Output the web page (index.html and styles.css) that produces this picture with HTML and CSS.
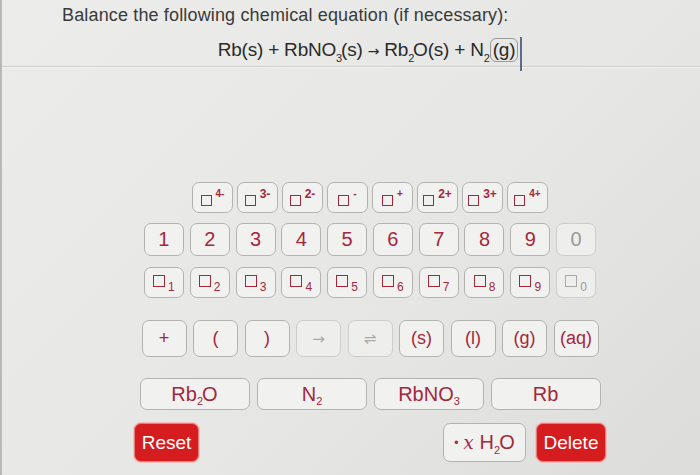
FILE: index.html
```html
<!DOCTYPE html>
<html>
<head>
<meta charset="utf-8">
<link rel="stylesheet" href="styles.css">
</head>
<body>
<div class="page">
  <div class="header">
    <div class="title">Balance the following chemical equation (if necessary):</div>
    <div class="eqwrap">
      <div class="equation">Rb(s) + RbNO<span class="esub">3</span>(s) <span class="arr">→</span> Rb<span class="esub">2</span>O(s) + N<span class="esub">2</span><span class="sel">(g)</span><span class="caret"></span></div>
    </div>
  </div>
  <div class="kb">
    <div class="row r1">
      <div class="key"><span class="box"></span><span class="sup">4-</span></div>
      <div class="key"><span class="box"></span><span class="sup big">3-</span></div>
      <div class="key"><span class="box"></span><span class="sup big">2-</span></div>
      <div class="key"><span class="box"></span><span class="sup">-</span></div>
      <div class="key"><span class="box"></span><span class="sup">+</span></div>
      <div class="key"><span class="box"></span><span class="sup big">2+</span></div>
      <div class="key"><span class="box"></span><span class="sup big">3+</span></div>
      <div class="key"><span class="box"></span><span class="sup">4+</span></div>
    </div>
    <div class="row r2">
      <div class="key">1</div>
      <div class="key">2</div>
      <div class="key">3</div>
      <div class="key">4</div>
      <div class="key">5</div>
      <div class="key">6</div>
      <div class="key">7</div>
      <div class="key">8</div>
      <div class="key">9</div>
      <div class="key off">0</div>
    </div>
    <div class="row r3">
      <div class="key"><span class="sbox"></span><span class="sub">1</span></div>
      <div class="key"><span class="sbox"></span><span class="sub">2</span></div>
      <div class="key"><span class="sbox"></span><span class="sub">3</span></div>
      <div class="key"><span class="sbox"></span><span class="sub">4</span></div>
      <div class="key"><span class="sbox"></span><span class="sub">5</span></div>
      <div class="key"><span class="sbox"></span><span class="sub">6</span></div>
      <div class="key"><span class="sbox"></span><span class="sub">7</span></div>
      <div class="key"><span class="sbox"></span><span class="sub">8</span></div>
      <div class="key"><span class="sbox"></span><span class="sub">9</span></div>
      <div class="key off"><span class="sbox"></span><span class="sub">0</span></div>
    </div>
    <div class="row r4">
      <div class="key">+</div>
      <div class="key">(</div>
      <div class="key">)</div>
      <div class="key off sym">→</div>
      <div class="key off sym">⇌</div>
      <div class="key">(s)</div>
      <div class="key">(l)</div>
      <div class="key">(g)</div>
      <div class="key">(aq)</div>
    </div>
    <div class="row r5">
      <div class="key">Rb<span class="ksub">2</span>O</div>
      <div class="key">N<span class="ksub">2</span></div>
      <div class="key">RbNO<span class="ksub">3</span></div>
      <div class="key">Rb</div>
    </div>
    <div class="row r6">
      <div class="key red reset">Reset</div>
      <div class="right">
        <div class="key water"><span class="dot">•</span><span class="x">x</span>H<span class="ksub">2</span>O</div>
        <div class="key red del">Delete</div>
      </div>
    </div>
  </div>
</div>
</body>
</html>
```
FILE: styles.css
```css
html, body {
  margin: 0;
  padding: 0;
}
body {
  width: 700px;
  height: 475px;
  overflow: hidden;
  background: linear-gradient(135deg, #ececea 0%, #e6e6e4 60%, #dcdcda 100%);
  font-family: "Liberation Sans", Arial, sans-serif;
}
.page {
  width: 700px;
  height: 475px;
  border-left: 2px solid #b9b9b7;
  box-sizing: border-box;
}
.header {
  height: 66px;
  border-bottom: 1px solid #cfcfcd;
  box-shadow: 0 1px 0 #f2f2f0;
}
.title {
  padding-left: 60px;
  padding-top: 5px;
  font-size: 18px;
  line-height: 20px;
  letter-spacing: 0.15px;
  color: #3a3a3a;
}
.eqwrap {
  display: flex;
  justify-content: center;
  padding-left: 38px;
  margin-top: 12px;
}
.equation {
  display: flex;
  align-items: baseline;
  font-size: 19px;
  line-height: 26px;
  color: #2a2a2a;
  white-space: pre;
  letter-spacing: -0.2px;
}
.esub {
  font-size: 11px;
  position: relative;
  top: 6px;
  margin: 0 -1px 0 0;
}
.arr {
  font-family: "DejaVu Sans", sans-serif;
  font-size: 14px;
}
.sel {
  border: 1px solid #9a9a9a;
  border-radius: 6px;
  padding: 0 2px;
  margin-left: 1px;
  line-height: 22px;
}
.caret {
  align-self: center;
  width: 2px;
  height: 34px;
  background: #5d6b8c;
  margin-left: 2px;
}
.kb {
  padding-left: 38px;
  display: flex;
  flex-direction: column;
  align-items: center;
}
.row {
  display: flex;
}
.key {
  box-sizing: border-box;
  display: flex;
  align-items: center;
  justify-content: center;
  background: #f1f1ef;
  border: 1px solid #b3b3b1;
  border-radius: 7px;
  color: #a3283c;
  font-size: 20px;
}
.key.off {
  color: #9a9a9a;
  border-color: #cdcdcb;
  background: #eeeeec;
}
.key.off .sbox {
  border-color: #a8a8a8;
}
.r1 {
  gap: 4px;
  margin-top: 115px;
}
.r1 .key {
  width: 41px;
  height: 31px;
}
.box {
  width: 9px;
  height: 9px;
  border: 1px solid #a3283c;
  margin-top: 5px;
}
.sup {
  font-size: 10px;
  font-weight: bold;
  margin-left: 4px;
  margin-top: -8px;
}
.sup.big {
  font-size: 12px;
}
.r2 {
  gap: 5.8px;
  margin-top: 10px;
}
.r2 .key {
  width: 40px;
  height: 33px;
}
.r3 {
  gap: 5.8px;
  margin-top: 11px;
}
.r3 .key {
  width: 40px;
  height: 31px;
}
.sbox {
  width: 10px;
  height: 10px;
  border: 1px solid #a3283c;
  margin-top: -3px;
}
.sub {
  font-size: 12px;
  margin-left: 3px;
  margin-top: 8px;
}
.r4 {
  gap: 6.5px;
  margin-top: 22px;
}
.r4 .key {
  width: 45px;
  height: 37px;
  font-size: 18px;
}
.r4 .key.sym {
  font-family: "DejaVu Sans", sans-serif;
  font-size: 15px;
  color: #a8a8a8;
}
.r5 {
  gap: 7px;
  margin-top: 21px;
}
.r5 .key {
  width: 110px;
  height: 32px;
}
.ksub {
  font-size: 11px;
  position: relative;
  top: 7px;
  margin-right: -1px;
}
.r6 {
  width: 472px;
  justify-content: space-between;
  margin-top: 13px;
}
.right {
  display: flex;
  gap: 10px;
}
.r6 .key {
  height: 39px;
}
.key.red {
  background: #d51d1f;
  border: 1px solid #e77c7a;
  color: #ffffff;
  font-size: 19px;
  box-shadow: 0 0 0 1px #f4c0bd;
}
.reset {
  width: 65px;
}
.del {
  width: 70px;
}
.water {
  width: 83px;
}
.dot {
  font-size: 12px;
  margin-right: 5px;
}
.x {
  font-family: "DejaVu Serif", "Liberation Serif", serif;
  font-style: italic;
  font-size: 18px;
  margin-right: 6px;
}
```
